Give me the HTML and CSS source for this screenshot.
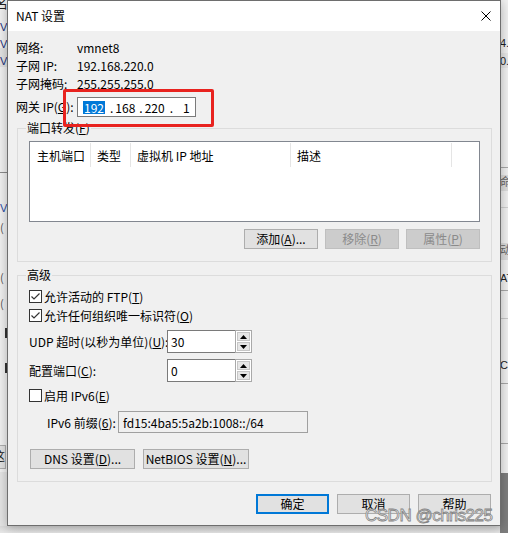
FILE: index.html
```html
<!DOCTYPE html>
<html lang="zh-CN">
<head>
<meta charset="utf-8">
<title>NAT 设置</title>
<link rel="stylesheet" href="styles.css">
</head>
<body>
<div class="desk">
  <span class="frag f-ming">名</span>
  <div class="band b1"></div>
  <span class="frag fv v1">V</span>
  <span class="frag fv v2">V</span>
  <span class="frag fv v3">V</span>
  <div class="hline l1"></div>
  <span class="frag fv v4">V</span>
  <span class="frag fp p1">(</span>
  <span class="frag fp p2">(</span>
  <span class="frag fp p3">(</span>
  <div class="mark m1"></div>
  <div class="mark m2"></div>
  <div class="lbtn"><span>这</span></div>
  <div class="lshade"></div>

  <span class="frag r r1">4.</span>
  <div class="rband rb1"></div>
  <span class="frag r r2">0.</span>
  <div class="rline rl1"></div>
  <div class="rband rb2"></div>
  <span class="frag r r3">命</span>
  <div class="rline rl2"></div>
  <div class="rband rb3"></div>
  <span class="frag r r4">动</span>
  <span class="frag r r5">AT</span>
  <div class="rline rl3"></div>
  <div class="rline rl4"></div>
  <span class="frag r r6">CF</span>
  <div class="rline rl5"></div>
  <div class="rline rl6"></div>
  <div class="rdark"></div>
  <div class="bstrip"></div>
</div>

<div class="dialog">
  <div class="titlebar">
    <span class="title">NAT 设置</span>
    <svg class="close" width="10" height="10" viewBox="0 0 10 10"><path d="M0.5 0.5L9.5 9.5M9.5 0.5L0.5 9.5" stroke="#000" stroke-width="1" fill="none"/></svg>
  </div>
  <div class="content">
    <div class="info">
      <div class="irow"><span>网络:</span><span>vmnet8</span></div>
      <div class="irow"><span>子网 IP:</span><span>192.168.220.0</span></div>
      <div class="irow"><span>子网掩码:</span><span>255.255.255.0</span></div>
      <div class="irow gw"><span>网关 IP(<u>G</u>):</span>
        <div class="ipbox"><span class="oct sel">192</span><span class="dot d1">.</span><span class="oct o2">168</span><span class="dot d2">.</span><span class="oct o3">220</span><span class="dot d3">.</span><span class="oct o4">1</span></div>
      </div>
    </div>

    <div class="group pf">
      <span class="legend">端口转发(<u>F</u>)</span>
      <div class="listview">
        <div class="lvhead">
          <span class="col c1">主机端口</span>
          <span class="col c2">类型</span>
          <span class="col c3">虚拟机 IP 地址</span>
          <span class="col c4">描述</span>
        </div>
      </div>
      <div class="btnrow">
        <span class="btn w74">添加(<u>A</u>)...</span>
        <span class="btn w74 dis">移除(<u>R</u>)</span>
        <span class="btn w74 dis">属性(<u>P</u>)</span>
      </div>
    </div>

    <div class="group adv">
      <span class="legend">高级</span>
      <div class="cbrow">
        <svg class="cb" width="13" height="13" viewBox="0 0 13 13"><rect x="0.5" y="0.5" width="12" height="12" fill="#fff" stroke="#333"/><path d="M2.5 6.5L5 9L10.5 3.5" stroke="#333" stroke-width="1.2" fill="none"/></svg>
        <span>允许活动的 FTP(<u>T</u>)</span>
      </div>
      <div class="cbrow">
        <svg class="cb" width="13" height="13" viewBox="0 0 13 13"><rect x="0.5" y="0.5" width="12" height="12" fill="#fff" stroke="#333"/><path d="M2.5 6.5L5 9L10.5 3.5" stroke="#333" stroke-width="1.2" fill="none"/></svg>
        <span>允许任何组织唯一标识符(<u>O</u>)</span>
      </div>
      <div class="frow udp">
        <span class="flabel">UDP 超时(以秒为单位)(<u>U</u>):</span>
        <div class="spin">
          <span class="spintext">30</span>
          <div class="spinbtns">
            <span class="sb"><svg width="7" height="4" viewBox="0 0 7 4"><path d="M0 4L3.5 0L7 4Z" fill="#000"/></svg></span>
            <span class="sb"><svg width="7" height="4" viewBox="0 0 7 4"><path d="M0 0L3.5 4L7 0Z" fill="#000"/></svg></span>
          </div>
        </div>
      </div>
      <div class="frow port">
        <span class="flabel">配置端口(<u>C</u>):</span>
        <div class="spin">
          <span class="spintext">0</span>
          <div class="spinbtns">
            <span class="sb"><svg width="7" height="4" viewBox="0 0 7 4"><path d="M0 4L3.5 0L7 4Z" fill="#000"/></svg></span>
            <span class="sb"><svg width="7" height="4" viewBox="0 0 7 4"><path d="M0 0L3.5 4L7 0Z" fill="#000"/></svg></span>
          </div>
        </div>
      </div>
      <div class="cbrow v6">
        <svg class="cb" width="13" height="13" viewBox="0 0 13 13"><rect x="0.5" y="0.5" width="12" height="12" fill="#fff" stroke="#333"/></svg>
        <span>启用 IPv6(<u>E</u>)</span>
      </div>
      <div class="frow prefix">
        <span class="plabel">IPv6 前缀(<u>6</u>):</span>
        <span class="rotext">fd15:4ba5:5a2b:1008::/64</span>
      </div>
      <div class="btnrow2">
        <span class="btn dns">DNS 设置(<u>D</u>)...</span>
        <span class="btn nb">NetBIOS 设置(<u>N</u>)...</span>
      </div>
    </div>

    <div class="footer">
      <span class="btn w73 def">确定</span>
      <span class="btn w73">取消</span>
      <span class="btn w73">帮助</span>
    </div>
  </div>
</div>

<div class="redbox"></div>
<div class="watermark">CSDN @chris225</div>
</body>
</html>
```
FILE: styles.css
```css
html, body {
  margin: 0;
  padding: 0;
}
body {
  width: 508px;
  height: 533px;
  overflow: hidden;
  position: relative;
  background: #f0f0f0;
  font-family: "Noto Sans CJK SC", "Noto Sans", sans-serif;
  font-size: 12px;
  color: #000;
}
u { text-decoration: underline; text-underline-offset: 1px; }

/* background window fragments */
.desk { position: absolute; inset: 0; z-index: 0; }
.frag { position: absolute; line-height: 1; white-space: nowrap; }
.f-ming { left: -5px; top: -4px; font-size: 13px; color: #222; }
.band { position: absolute; left: 0; width: 8px; background: #e2e2e2; }
.b1 { top: 48px; height: 19px; }
.fv { left: 0; font-family: "Liberation Sans", sans-serif; font-size: 11px; color: #23307a; }
.v1 { top: 22px; }
.v2 { top: 39px; }
.v3 { top: 56px; }
.v4 { top: 203px; color: #2a4aa0; }
.fp { left: 0; font-size: 11px; color: #555; }
.p1 { top: 222px; }
.p2 { top: 272px; }
.p3 { top: 298px; }
.hline { position: absolute; left: 0; width: 8px; height: 1px; background: #8a8a8a; }
.l1 { top: 172px; }
.mark { position: absolute; left: 5px; width: 2px; height: 10px; background: #333; }
.m1 { top: 328px; }
.m2 { top: 363px; }
.lbtn { position: absolute; left: -10px; top: 445px; width: 16px; height: 24px; border: 1px solid #adadad; background: #e1e1e1; box-sizing: border-box; }
.lbtn span { position: absolute; left: 2px; top: 4px; font-size: 12px; line-height: 1; color: #222; }
.lshade { position: absolute; left: 0; top: 472px; width: 8px; height: 61px; background: #e4e4e4; }

.r { left: 500px; font-family: "Liberation Sans", sans-serif; font-size: 11px; color: #222; }
.r1 { top: 38px; }
.r2 { top: 56px; }
.r3 { top: 176px; font-family: "Noto Sans CJK SC", sans-serif; color: #666; }
.r4 { top: 244px; font-family: "Noto Sans CJK SC", sans-serif; color: #666; }
.r5 { top: 273px; }
.r6 { top: 360px; }
.rband { position: absolute; left: 500px; width: 8px; background: #dcdcdc; }
.rb1 { top: 53px; height: 15px; background: #e6e6e6; }
.rb2 { top: 175px; height: 16px; }
.rb3 { top: 243px; height: 17px; }
.rline { position: absolute; left: 500px; width: 8px; height: 1px; background: #a8a8a8; }
.rl1 { top: 167px; }
.rl2 { top: 207px; background: #d0d0d0; }
.rl3 { top: 290px; }
.rl4 { top: 318px; background: #c8c8c8; }
.rl5 { top: 383px; }
.rl6 { top: 443px; }
.rdark { position: absolute; left: 500px; top: 473px; width: 8px; height: 60px; background: #7d7d7d; }
.bstrip { position: absolute; left: 0; top: 526px; width: 500px; height: 7px; background: linear-gradient(#d9d9d9, #e8e8e8); }

/* dialog */
.dialog {
  position: relative;
  z-index: 1;
  margin-left: 7px;
  width: 494px;
  height: 526px;
  box-sizing: border-box;
  border: 1px solid #6e6e6e;
  background: #f0f0f0;
  box-shadow: 0 2px 10px rgba(0, 0, 0, 0.28);
  display: flex;
  flex-direction: column;
}
.titlebar {
  height: 30px;
  flex: none;
  background: #fff;
  display: flex;
  align-items: center;
  justify-content: space-between;
  padding: 0 9px 0 8px;
}
.title { font-size: 12px; line-height: 16px; }
.close { display: block; }

.content {
  padding: 0 8px 0 9px;
  display: flex;
  flex-direction: column;
}
.info { margin: 8px 0 0 -1px; }
.irow {
  display: grid;
  grid-template-columns: 61px auto;
  height: 18px;
  line-height: 18px;
  white-space: nowrap;
}
.irow.gw { margin-top: 4px; height: 20px; align-items: center; }
.ipbox {
  width: 119px;
  height: 20px;
  box-sizing: border-box;
  border: 1px solid #7a7a7a;
  background: #fff;
  display: flex;
  align-items: center;
  line-height: 13px;
}
.oct { display: inline-block; }
.sel { background: #0078d7; color: #fff; margin-left: 5px; padding: 0 1px; }
.dot { margin-left: 5px; }
.o2 { margin-left: 2px; }
.d2 { margin-left: 4px; }
.o3 { margin-left: 2px; }
.d3 { margin-left: 5px; }
.o4 { margin-left: 10px; }

.group {
  position: relative;
  border: 1px solid #dcdcdc;
}
.legend {
  position: absolute;
  left: 8px;
  top: -9px;
  padding: 0 1px;
  background: #f0f0f0;
  line-height: 16px;
  white-space: nowrap;
}
.pf { margin-top: 11px; padding: 12px 11px 12px 11px; }
.listview {
  height: 81px;
  box-sizing: border-box;
  border: 1px solid #828790;
  background: #fff;
}
.lvhead { display: flex; height: 25px; }
.col {
  display: flex;
  align-items: center;
  height: 24px;
  margin-top: 1px;
  box-sizing: border-box;
  border-right: 1px solid #e5e5e5;
  padding-left: 6px;
  white-space: nowrap;
}
.c1 { width: 61px; padding-left: 7px; }
.c2 { width: 40px; }
.c3 { width: 160px; }
.c4 { width: 161px; }

.btnrow { display: flex; justify-content: flex-end; gap: 7px; margin-top: 7px; }
.btn {
  display: flex;
  align-items: center;
  justify-content: center;
  height: 20px;
  box-sizing: border-box;
  border: 1px solid #adadad;
  background: #e1e1e1;
  white-space: nowrap;
  line-height: 16px;
}
.w74 { width: 74px; }
.w73 { width: 73px; }
.btn.dis { background: #cccccc; border-color: #bfbfbf; color: #8a8a8a; }
.btn.def { border: 2px solid #0078d7; }

.adv { margin-top: 13px; padding: 11px 11px 12px 11px; }
.cbrow { display: flex; align-items: center; gap: 2px; height: 19px; white-space: nowrap; }
.cb { display: block; flex: none; }
.frow { display: flex; align-items: center; white-space: nowrap; }
.udp { margin-top: 5px; height: 23px; }
.port { margin-top: 6px; height: 23px; }
.flabel { width: 138px; flex: none; }
.spin { display: flex; height: 23px; }
.spintext {
  width: 68px;
  box-sizing: border-box;
  border: 1px solid #7a7a7a;
  border-right: none;
  background: #fff;
  padding-left: 3px;
  display: flex;
  align-items: center;
}
.spinbtns {
  width: 17px;
  box-sizing: border-box;
  border: 1px solid #a9a9a9;
  background: #fff;
  padding: 1px;
  display: flex;
  flex-direction: column;
  gap: 1px;
}
.sb {
  flex: 1;
  box-sizing: border-box;
  border: 1px solid #c6c6c6;
  background: #e6e6e6;
  display: flex;
  align-items: center;
  justify-content: center;
}
.sb svg { display: block; }
.v6 { margin-top: 4px; }
.prefix { margin-top: 6px; height: 22px; padding-left: 18px; }
.plabel { width: 71px; flex: none; }
.rotext {
  width: 190px;
  height: 22px;
  box-sizing: border-box;
  border: 1px solid #a0a0a0;
  background: #f0f0f0;
  padding-left: 4px;
  display: flex;
  align-items: center;
}
.btnrow2 { display: flex; gap: 8px; margin-top: 16px; margin-left: 1px; }
.dns { width: 105px; }
.nb { width: 106px; }

.footer { display: flex; justify-content: flex-end; gap: 8px; margin: 12px 1px 0 0; }

.redbox {
  position: absolute;
  z-index: 2;
  left: 63px;
  top: 89px;
  width: 151px;
  height: 38px;
  box-sizing: border-box;
  border: 3px solid #e8231f;
  border-radius: 2px;
}
.watermark {
  position: absolute;
  z-index: 3;
  left: 365px;
  top: 506px;
  font-family: "Liberation Sans", sans-serif;
  font-size: 17px;
  letter-spacing: -0.5px;
  line-height: 20px;
  color: rgba(250, 250, 250, 0.8);
  -webkit-text-stroke: 0.8px #858585;
  white-space: nowrap;
}
```
